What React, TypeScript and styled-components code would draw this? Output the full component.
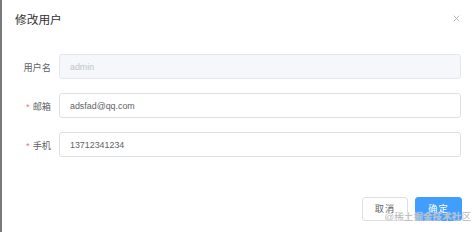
import React from "react";
import styled, { createGlobalStyle } from "styled-components";

const GlobalStyle = createGlobalStyle`
  html, body {
    margin: 0;
    padding: 0;
    background: #ffffff;
  }
  body {
    font-family: "Liberation Sans", "Noto Sans CJK SC", sans-serif;
  }
`;

const Dialog = styled.div`
  position: relative;
  width: 474px;
  height: 232px;
  box-sizing: border-box;
  border-left: 2px solid #7b7b7b;
  background: #fff;
  display: flex;
  flex-direction: column;
  overflow: hidden;
`;

const Header = styled.div`
  display: flex;
  align-items: center;
  justify-content: space-between;
  padding: 13px 14px 0 13px;
  height: 14px;
`;

const Title = styled.span`
  font-size: 11.7px;
  line-height: 14px;
  color: #303133;
`;

const Close = styled.span`
  display: flex;
  margin-top: -3px;
`;

const Form = styled.div`
  display: flex;
  flex-direction: column;
  gap: 14px;
  padding-top: 27px;
`;

const Row = styled.div`
  display: flex;
  align-items: center;
  height: 25px;
`;

const Label = styled.label`
  width: 49px;
  padding-right: 8px;
  text-align: right;
  font-size: 9.2px;
  color: #606266;
`;

const Star = styled.span`
  color: #f56c6c;
  margin-right: 3px;
`;

const Input = styled.div<{ $disabled?: boolean }>`
  box-sizing: border-box;
  width: 402px;
  height: 25px;
  display: flex;
  align-items: center;
  padding-left: 10px;
  border: 1px solid ${(p) => (p.$disabled ? "#e4e7ed" : "#dcdfe6")};
  border-radius: 3px;
  background: ${(p) => (p.$disabled ? "#f5f7fa" : "#fff")};
  color: ${(p) => (p.$disabled ? "#c0c4cc" : "#606266")};
  font-size: 8.9px;
`;

const Footer = styled.div`
  display: flex;
  justify-content: flex-end;
  gap: 7px;
  padding: 0 12px 0 0;
  margin-top: 40px;
`;

const Button = styled.button<{ $primary?: boolean }>`
  box-sizing: border-box;
  width: ${(p) => (p.$primary ? "47px" : "46px")};
  height: 24px;
  border-radius: 3px;
  border: 1px solid ${(p) => (p.$primary ? "#409eff" : "#dcdfe6")};
  background: ${(p) => (p.$primary ? "#409eff" : "#fff")};
  color: ${(p) => (p.$primary ? "#fff" : "#606266")};
  font-family: "Liberation Sans", "Noto Sans CJK SC", sans-serif;
  font-size: 9.2px;
  padding: 0 0 2px;
  letter-spacing: 1px;
`;

const Watermark = styled.span`
  position: absolute;
  right: 3px;
  bottom: 9px;
  font-size: 9.6px;
  color: #b8b8b8;
  text-shadow: 0 0 1px #ffffff;
  pointer-events: none;
`;

function App() {
  return (
    <>
      <GlobalStyle />
      <Dialog>
        <Header>
          <Title>修改用户</Title>
          <Close>
            <svg width="7" height="7" viewBox="0 0 10 10">
              <path d="M1 1L9 9M9 1L1 9" stroke="#a8abb2" strokeWidth="1.2" />
            </svg>
          </Close>
        </Header>
        <Form>
          <Row>
            <Label>用户名</Label>
            <Input $disabled>admin</Input>
          </Row>
          <Row>
            <Label>
              <Star>*</Star>邮箱
            </Label>
            <Input>adsfad@qq.com</Input>
          </Row>
          <Row>
            <Label>
              <Star>*</Star>手机
            </Label>
            <Input>13712341234</Input>
          </Row>
        </Form>
        <Footer>
          <Button>取消</Button>
          <Button $primary>确定</Button>
        </Footer>
        <Watermark>@稀土掘金技术社区</Watermark>
      </Dialog>
    </>
  );
}

export default App;
